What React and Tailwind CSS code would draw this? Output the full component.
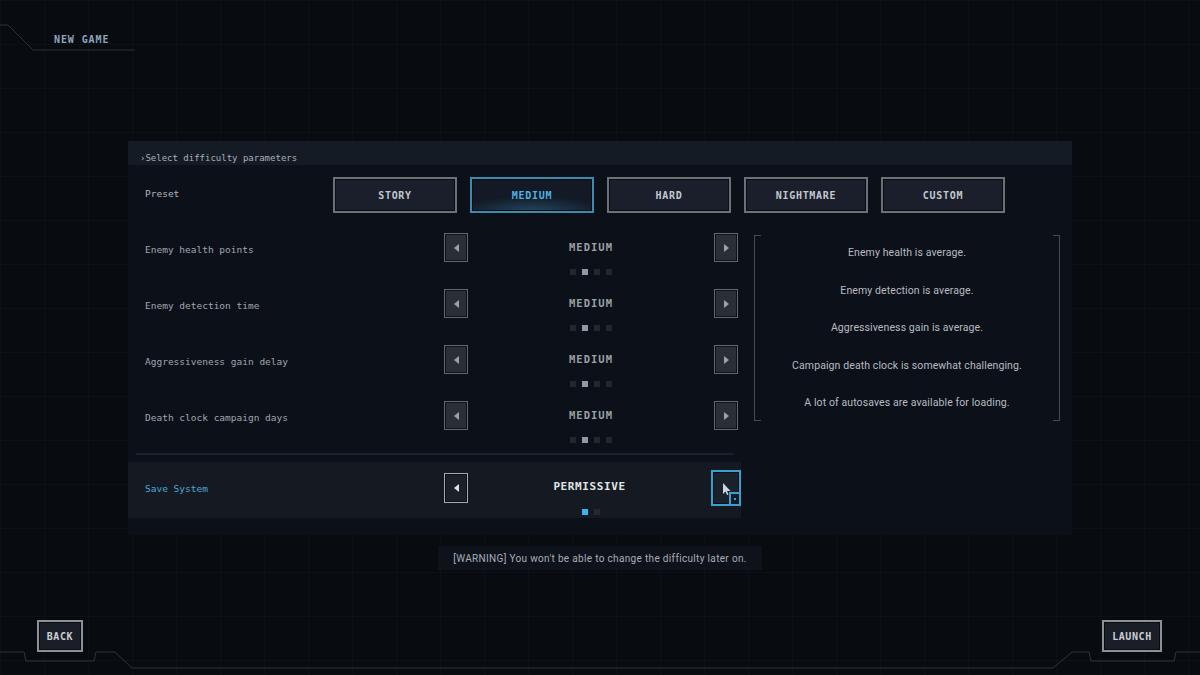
import React from 'react'

const mono = "font-['DejaVu_Sans_Mono','Liberation_Mono',monospace]"
const sans = "font-['Roboto','Noto_Sans',sans-serif]"

const presets = ['STORY', 'MEDIUM', 'HARD', 'NIGHTMARE', 'CUSTOM']

const rows = [
  'Enemy health points',
  'Enemy detection time',
  'Aggressiveness gain delay',
  'Death clock campaign days',
]

const descriptions = [
  'Enemy health is average.',
  'Enemy detection is average.',
  'Aggressiveness gain is average.',
  'Campaign death clock is somewhat challenging.',
  'A lot of autosaves are available for loading.',
]

function Tri({ dir = 'left', color = '#9ca1a8' }) {
  return (
    <svg width="5" height="8" viewBox="0 0 5 8">
      <path d={dir === 'left' ? 'M5 0L0 4L5 8Z' : 'M0 0L5 4L0 8Z'} fill={color} />
    </svg>
  )
}

function ArrowBtn({ dir }) {
  return (
    <div className="w-[24px] h-[29px] flex items-center justify-center border border-[#62676e] bg-[#2a2e35] shadow-[inset_0_0_0_1px_#0e1115]">
      <Tri dir={dir} />
    </div>
  )
}

function Dots({ count, active, activeColor = 'bg-[#8d99a6]' }) {
  return (
    <div className="flex gap-[6px]">
      {Array.from({ length: count }).map((_, i) => (
        <div key={i} className={`w-[6px] h-[6px] ${i === active ? activeColor : 'bg-[#232830]'}`} />
      ))}
    </div>
  )
}

function Bracket({ side }) {
  const edge = side === 'left' ? 'border-l' : 'border-r'
  return (
    <div className={`w-[7px] h-full border-y ${edge} border-[#454b53]`} />
  )
}

export default function App() {
  return (
    <div className="relative w-[1200px] h-[675px] overflow-hidden bg-[#080b10] bg-[linear-gradient(rgba(255,255,255,0.018)_1px,transparent_1px),linear-gradient(90deg,rgba(255,255,255,0.018)_1px,transparent_1px)] bg-[size:44px_44px] flex flex-col">
      {/* frame lines */}
      <svg className="absolute left-0 top-0 pointer-events-none" width="1200" height="675">
        <path d="M0 25 L8 25 L33 50 L135 50" stroke="#26323b" strokeWidth="1" fill="none" />
        <path d="M0 652 L24 652 L26 661 L94 661 L96 652 L115 652 L132 668 L1053 668 L1072 652 L1089 652 L1091 661 L1174 661 L1176 652 L1200 652" stroke="#283640" strokeWidth="1" fill="none" />
      </svg>

      <div className={`${mono} pl-[54px] pt-[32px] h-[141px] text-[10px] font-bold tracking-[0.9px] text-[#8ea6bb]`}>
        NEW GAME
      </div>

      {/* panel */}
      <div className="ml-[128px] w-[944px] h-[394px] bg-[#0c1119]">
        <div className={`${mono} h-[24px] flex items-end pl-[12px] bg-[#151b24] text-[9px] text-[#a9b0b8]`}>
          ›Select difficulty parameters
        </div>

        <div className="flex items-start pt-[12px] h-[62px]">
          <div className={`${mono} w-[205px] pl-[17px] text-[9.5px] text-[#b0b5bb] mt-[10px]`}>Preset</div>
          <div className="flex gap-[13px]">
            {presets.map((p) => {
              const sel = p === 'MEDIUM'
              return (
                <div
                  key={p}
                  className={`${mono} w-[124px] h-[36px] flex items-center justify-center text-[10px] font-bold tracking-[0.7px] border-2 shadow-[inset_0_0_0_1px_#0a0d12] ${
                    sel
                      ? 'border-[#3f89ad] text-[#4fb2e2] bg-[#131a25] bg-[radial-gradient(ellipse_60%_45%_at_50%_100%,rgba(60,150,200,0.35),transparent)]'
                      : 'border-[#6c7178] text-[#c3c8cf] bg-[#1a1f2b]'
                  }`}
                >
                  {p}
                </div>
              )
            })}
          </div>
        </div>

        <div className="flex">
          {/* left column */}
          <div className="w-[613px] flex flex-col">
            {rows.map((r) => (
              <div key={r} className="h-[56px] pt-[6px] flex flex-col">
                <div className="flex items-center h-[29px]">
                  <div className={`${mono} w-[316px] pl-[17px] text-[9.5px] text-[#a0a6ad] mt-[6px]`}>{r}</div>
                  <ArrowBtn dir="left" />
                  <div className={`${mono} w-[246px] text-center text-[10.5px] font-bold tracking-[1px] text-[#9aa0a6] mt-[1px]`}>
                    MEDIUM
                  </div>
                  <ArrowBtn dir="right" />
                </div>
                <div className="ml-[340px] w-[246px] flex justify-center mt-[7px]">
                  <Dots count={4} active={1} />
                </div>
              </div>
            ))}
            <div className="ml-[8px] w-[597px] h-[2px] bg-[#1c222b] mt-[2px]" />
            <div className="mt-[7px] h-[56px] bg-[#151a22] flex flex-col">
              <div className="flex items-center pt-[8px] h-[44px]">
                <div className={`${mono} w-[316px] pl-[17px] text-[9.5px] text-[#4ea6d6] mt-[2px]`}>Save System</div>
                <div className="w-[24px] h-[30px] flex items-center justify-center border border-[#a5a9ae] bg-[#1b2029] shadow-[inset_0_0_0_1px_#0b0e12]">
                  <Tri dir="left" color="#e0e3e6" />
                </div>
                <div className={`${mono} w-[243px] text-center text-[11px] font-bold tracking-[0.6px] text-[#e2e5e8] -mt-[1px]`}>
                  PERMISSIVE
                </div>
                <div className="relative w-[30px] h-[36px] border-2 border-[#3a9fd0] bg-[#1b212b] shadow-[inset_0_0_0_1px_#0b0e12]">
                  <svg className="absolute left-[9px] top-[10px]" width="9" height="14" viewBox="0 0 9 14">
                    <path d="M1 1 L1 12 L3.5 9.5 L5 13 L6.5 12.4 L5 9 L8.5 9 Z" fill="#c9d6df" />
                  </svg>
                  <div className="absolute right-[-2px] bottom-[-2px] w-[12px] h-[14px] border-2 border-[#3a9fd0] bg-[#141a22] flex items-center justify-center">
                    <div className="w-[2px] h-[2px] bg-[#3a9fd0]" />
                  </div>
                </div>
              </div>
              <div className="ml-[340px] w-[246px] flex justify-center mt-[3px]">
                <Dots count={2} active={0} activeColor="bg-[#3ab4ef]" />
              </div>
            </div>
          </div>

          {/* description box */}
          <div className="ml-[13px] mt-[8px] w-[306px] h-[186px] flex">
            <Bracket side="left" />
            <div className={`${sans} flex-1 flex flex-col justify-between py-[11px] text-[10.5px] tracking-[0.1px] text-[#b7bbc0]`}>
              {descriptions.map((d) => (
                <div key={d} className="h-[14px] leading-[14px] text-center">{d}</div>
              ))}
            </div>
            <Bracket side="right" />
          </div>
        </div>
      </div>

      <div className="mt-[11px] flex justify-center">
        <div className={`${sans} w-[324px] h-[24px] flex items-center justify-center bg-[#0e131b] text-[10px] tracking-[0.33px] text-[#a8adb3]`}>
          [WARNING] You won't be able to change the difficulty later on.
        </div>
      </div>

      <div className="mt-[50px] flex justify-between pl-[37px] pr-[38px]">
        <div className={`${mono} w-[46px] h-[32px] flex items-center justify-center border-2 border-[#8d9197] bg-[#1a1e27] shadow-[inset_0_0_0_1px_#0a0c10] text-[10px] font-bold tracking-[0.6px] text-[#c8cdd4]`}>
          BACK
        </div>
        <div className={`${mono} w-[60px] h-[32px] flex items-center justify-center border-2 border-[#8d9197] bg-[#1a1e27] shadow-[inset_0_0_0_1px_#0a0c10] text-[10px] font-bold tracking-[0.6px] text-[#c8cdd4]`}>
          LAUNCH
        </div>
      </div>
    </div>
  )
}
